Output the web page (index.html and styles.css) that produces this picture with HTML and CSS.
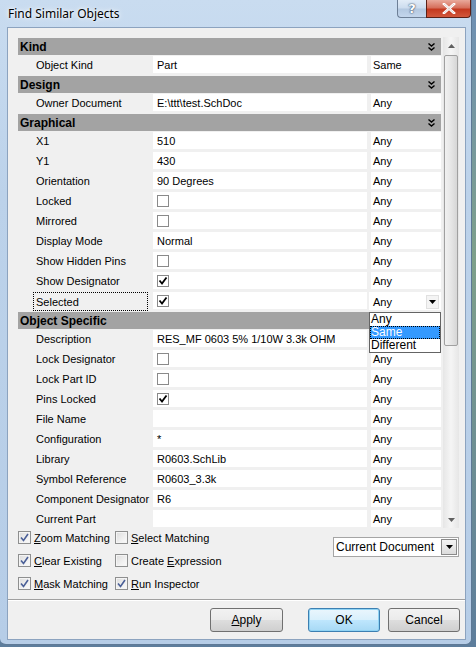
FILE: index.html
```html
<!DOCTYPE html>
<html>
<head>
<meta charset="utf-8">
<title>Find Similar Objects</title>
<link rel="stylesheet" href="styles.css">
</head>
<body>
<div class="desk">
  <div class="window">
    <div class="titlebar">
      <span class="title">Find Similar Objects</span>
      <div class="caption-btns">
        <div class="cbtn help"><span>?</span></div>
        <div class="cbtn close">
          <svg width="14" height="11" viewBox="0 0 14 11"><path d="M2 1 L12 10 M12 1 L2 10" stroke="#fff" stroke-width="2.6" fill="none" stroke-linecap="square"/><path d="M2 1 L12 10 M12 1 L2 10" stroke="#6b2a20" stroke-width="0.6" fill="none" opacity="0.35"/></svg>
        </div>
      </div>
    </div>
    <div class="client">
      <div class="main">
        <div class="panel">
          <div class="list">
            <div class="hdr"><span>Kind</span><svg class="chev" width="7" height="8" viewBox="0 0 7 8"><path d="M0.5 0.5 L3.5 3 L6.5 0.5 M0.5 4.5 L3.5 7 L6.5 4.5" stroke="#000" stroke-width="1.4" fill="none"/></svg></div>
            <div class="row"><span class="name">Object Kind</span><span class="val">Part</span><span class="match">Same</span></div>

            <div class="hdr"><span>Design</span><svg class="chev" width="7" height="8" viewBox="0 0 7 8"><path d="M0.5 0.5 L3.5 3 L6.5 0.5 M0.5 4.5 L3.5 7 L6.5 4.5" stroke="#000" stroke-width="1.4" fill="none"/></svg></div>
            <div class="row"><span class="name">Owner Document</span><span class="val">E:\ttt\test.SchDoc</span><span class="match">Any</span></div>

            <div class="hdr"><span>Graphical</span><svg class="chev" width="7" height="8" viewBox="0 0 7 8"><path d="M0.5 0.5 L3.5 3 L6.5 0.5 M0.5 4.5 L3.5 7 L6.5 4.5" stroke="#000" stroke-width="1.4" fill="none"/></svg></div>
            <div class="row"><span class="name">X1</span><span class="val">510</span><span class="match">Any</span></div>
            <div class="row"><span class="name">Y1</span><span class="val">430</span><span class="match">Any</span></div>
            <div class="row"><span class="name">Orientation</span><span class="val">90 Degrees</span><span class="match">Any</span></div>
            <div class="row"><span class="name">Locked</span><span class="val"><i class="gcb"></i></span><span class="match">Any</span></div>
            <div class="row"><span class="name">Mirrored</span><span class="val"><i class="gcb"></i></span><span class="match">Any</span></div>
            <div class="row"><span class="name">Display Mode</span><span class="val">Normal</span><span class="match">Any</span></div>
            <div class="row"><span class="name">Show Hidden Pins</span><span class="val"><i class="gcb"></i></span><span class="match">Any</span></div>
            <div class="row"><span class="name">Show Designator</span><span class="val"><i class="gcb on"><svg width="10" height="10" viewBox="0 0 10 10"><path d="M1.5 4.5 L4 7.5 L8.5 1.5" stroke="#000" stroke-width="1.8" fill="none"/></svg></i></span><span class="match">Any</span></div>
            <div class="row sel"><span class="name"><span class="focus">Selected</span></span><span class="val"><i class="gcb on"><svg width="10" height="10" viewBox="0 0 10 10"><path d="M1.5 4.5 L4 7.5 L8.5 1.5" stroke="#000" stroke-width="1.8" fill="none"/></svg></i></span><span class="match combo"><span class="ctext">Any</span><span class="carrow"><svg width="7" height="4" viewBox="0 0 7 4"><path d="M0 0 H7 L3.5 4 Z" fill="#000"/></svg></span>
              <span class="droplist">
                <span class="ditem">Any</span>
                <span class="ditem hi">Same</span>
                <span class="ditem">Different</span>
              </span>
            </span></div>

            <div class="hdr"><span>Object Specific</span></div>
            <div class="row"><span class="name">Description</span><span class="val">RES_MF 0603 5% 1/10W 3.3k OHM</span><span class="match"></span></div>
            <div class="row"><span class="name">Lock Designator</span><span class="val"><i class="gcb"></i></span><span class="match">Any</span></div>
            <div class="row"><span class="name">Lock Part ID</span><span class="val"><i class="gcb"></i></span><span class="match">Any</span></div>
            <div class="row"><span class="name">Pins Locked</span><span class="val"><i class="gcb on"><svg width="10" height="10" viewBox="0 0 10 10"><path d="M1.5 4.5 L4 7.5 L8.5 1.5" stroke="#000" stroke-width="1.8" fill="none"/></svg></i></span><span class="match">Any</span></div>
            <div class="row"><span class="name">File Name</span><span class="val"></span><span class="match">Any</span></div>
            <div class="row"><span class="name">Configuration</span><span class="val">*</span><span class="match">Any</span></div>
            <div class="row"><span class="name">Library</span><span class="val">R0603.SchLib</span><span class="match">Any</span></div>
            <div class="row"><span class="name">Symbol Reference</span><span class="val">R0603_3.3k</span><span class="match">Any</span></div>
            <div class="row"><span class="name">Component Designator</span><span class="val">R6</span><span class="match">Any</span></div>
            <div class="row"><span class="name">Current Part</span><span class="val"></span><span class="match">Any</span></div>
          </div>
          <div class="scroll">
            <div class="sarrow"><svg width="7" height="4" viewBox="0 0 7 4"><path d="M0 4 H7 L3.5 0 Z" fill="#606060"/></svg></div>
            <div class="strack">
              <div class="thumb"></div>
            </div>
            <div class="sarrow"><svg width="7" height="4" viewBox="0 0 7 4"><path d="M0 0 H7 L3.5 4 Z" fill="#606060"/></svg></div>
          </div>
        </div>

        <div class="bottom">
          <div class="opts">
            <label class="opt"><i class="wcb on"><svg width="9" height="9" viewBox="0 0 9 9"><path d="M1 4.5 L3.5 7.5 L8 1" stroke="#4a5f97" stroke-width="1.6" fill="none"/></svg></i><span><u>Z</u>oom Matching</span></label>
            <label class="opt"><i class="wcb"></i><span><u>S</u>elect Matching</span></label>
            <label class="opt"><i class="wcb on"><svg width="9" height="9" viewBox="0 0 9 9"><path d="M1 4.5 L3.5 7.5 L8 1" stroke="#4a5f97" stroke-width="1.6" fill="none"/></svg></i><span><u>C</u>lear Existing</span></label>
            <label class="opt"><i class="wcb"></i><span>Create <u>E</u>xpression</span></label>
            <label class="opt"><i class="wcb on"><svg width="9" height="9" viewBox="0 0 9 9"><path d="M1 4.5 L3.5 7.5 L8 1" stroke="#4a5f97" stroke-width="1.6" fill="none"/></svg></i><span><u>M</u>ask Matching</span></label>
            <label class="opt"><i class="wcb on"><svg width="9" height="9" viewBox="0 0 9 9"><path d="M1 4.5 L3.5 7.5 L8 1" stroke="#4a5f97" stroke-width="1.6" fill="none"/></svg></i><span><u>R</u>un Inspector</span></label>
          </div>
          <div class="scope">
            <span class="scope-text">Current Document</span>
            <span class="scope-btn"><svg width="7" height="4" viewBox="0 0 7 4"><path d="M0 0 H7 L3.5 4 Z" fill="#000"/></svg></span>
          </div>
        </div>
      </div>
      <div class="footer">
        <div class="btn apply"><u>A</u>pply</div>
        <div class="btn ok">OK</div>
        <div class="btn cancel">Cancel</div>
      </div>
    </div>
  </div>
</div>
</body>
</html>
```

FILE: styles.css
```css
html, body {
  margin: 0;
  padding: 0;
}
body {
  width: 476px;
  height: 647px;
  overflow: hidden;
  background: linear-gradient(180deg, #6e8fb5 0%, #7ea08a 40%, #5d7d9c 100%);
  font-family: "Liberation Sans", Arial, sans-serif;
  font-size: 11px;
  color: #000;
}
.desk {
  width: 476px;
  height: 647px;
}
.window {
  width: 472px;
  height: 645px;
  box-sizing: border-box;
  background: linear-gradient(180deg, #c9dcf0 0%, #bcd2ea 30%, #b6cde7 100%);
  border: 1px solid #5e7996;
  border-top: none;
  border-left: none;
  border-radius: 0 0 6px 6px;
  display: flex;
  flex-direction: column;
  padding: 0 5px 4px 7px;
}
.titlebar {
  height: 27px;
  display: flex;
  align-items: flex-start;
  justify-content: space-between;
  flex-shrink: 0;
}
.title {
  font-family: "Noto Sans", "Open Sans", sans-serif;
  font-size: 12px;
  margin-top: 5px;
  margin-left: 1px;
  color: #000;
  text-shadow: 0 0 6px #fff, 0 0 3px #fff;
}
.caption-btns {
  display: flex;
  margin-right: -5px;
}
.cbtn {
  height: 18px;
  box-sizing: border-box;
  border: 1px solid #6d7f96;
  border-top: none;
  display: flex;
  align-items: center;
  justify-content: center;
}
.help {
  width: 29px;
  border-radius: 0 0 0 4px;
  border-right: none;
  background: linear-gradient(180deg, #e2ecf7 0%, #ccdcee 48%, #b3c8e0 52%, #c4d6ec 100%);
  color: #fff;
  font-family: "DejaVu Sans", sans-serif;
  font-weight: bold;
  font-size: 13px;
  text-shadow: 0 0 2px #304460, 0 0 1px #304460;
}
.close {
  width: 45px;
  border-radius: 0 0 4px 0;
  border-color: #5b2016;
  background: linear-gradient(180deg, #e9a99b 0%, #d6705c 45%, #c4391f 55%, #d2583c 100%);
}
.client {
  flex: 1;
  background: #f0f0f0;
  border: 1px solid #8ca3bf;
  display: flex;
  flex-direction: column;
}
.main {
  padding: 9px 6px 0 10px;
}
.panel {
  display: flex;
  height: 491px;
  gap: 2px;
}
.list {
  width: 423px;
  height: 491px;
  overflow: hidden;
  position: relative;
}
.hdr {
  height: 17px;
  margin-top: 1px;
  background: #a3a3a3;
  display: flex;
  align-items: center;
  justify-content: space-between;
  font-weight: bold;
  font-size: 12px;
  padding: 1px 6px 0 2px;
  box-sizing: border-box;
}
.chev {
  display: block;
}
.row {
  height: 20px;
  display: grid;
  grid-template-columns: 135px 214px 74px;
  align-items: start;
}
.row > span {
  height: 17px;
  margin-top: 1px;
  padding-top: 1px;
  box-sizing: border-box;
  display: flex;
  align-items: center;
  white-space: nowrap;
  overflow: visible;
}
.name {
  padding-left: 18px;
}
.val {
  background: #fff;
  padding-left: 4px;
}
.match {
  background: #fff;
  padding-left: 2px;
  margin-left: 4px;
}
.sel {
  position: relative;
  z-index: 2;
}
.row.sel > .name {
  padding-left: 15px;
  padding-top: 0;
  height: 20px;
  margin-top: 0;
}
.focus {
  display: flex;
  align-items: center;
  width: 115px;
  height: 19px;
  padding-left: 2px;
  padding-top: 1px;
  box-sizing: border-box;
  border: 1px dotted #000;
}
.gcb {
  display: flex;
  align-items: center;
  justify-content: center;
  width: 10px;
  height: 10px;
  border: 1px solid #8a8a8a;
  background: #fff;
}
.row > .combo {
  position: relative;
  justify-content: space-between;
  margin-left: 2px;
  padding-left: 4px;
  height: 18px;
}
.carrow {
  width: 13px;
  height: 14px;
  margin-right: 2px;
  background: #f4f4f4;
  border: 1px solid #e0e0e0;
  box-sizing: border-box;
  display: flex;
  align-items: center;
  justify-content: center;
}
.droplist {
  position: absolute;
  left: 0;
  top: 20px;
  width: 72px;
  box-sizing: border-box;
  border: 1px solid #646464;
  background: #fff;
  display: flex;
  flex-direction: column;
  z-index: 5;
}
.ditem {
  height: 13px;
  line-height: 13px;
  padding-left: 1px;
  font-size: 12px;
}
.ditem.hi {
  background: #3399ff;
  color: #fff;
  outline: 1px dotted #000;
  outline-offset: -1px;
}
.scroll {
  width: 16px;
  height: 491px;
  display: flex;
  flex-direction: column;
  background: linear-gradient(90deg, #e6e6e6 0%, #f5f5f5 50%, #e6e6e6 100%);
}
.sarrow {
  height: 17px;
  display: flex;
  align-items: center;
  justify-content: center;
  flex-shrink: 0;
}
.strack {
  flex: 1;
  padding-top: 1px;
}
.thumb {
  height: 291px;
  margin: 0 0 0 1px;
  width: 14px;
  box-sizing: border-box;
  border: 1px solid #a0a0a0;
  border-radius: 2px;
  background: linear-gradient(90deg, #f1f1f1 0%, #e6e6e6 50%, #d6d6d6 100%);
}
.bottom {
  display: flex;
  justify-content: space-between;
  align-items: flex-start;
  margin-top: 3px;
}
.opts {
  display: grid;
  grid-template-columns: 97px 140px;
  row-gap: 10px;
}
.opt {
  display: flex;
  align-items: center;
  height: 13px;
  gap: 3px;
  white-space: nowrap;
}
.opt u, .btn u {
  text-decoration: underline;
  text-underline-offset: 1px;
}
.wcb {
  width: 13px;
  height: 13px;
  box-sizing: border-box;
  border: 1px solid #8e8f8f;
  background: linear-gradient(135deg, #dcdcdc 0%, #f0f0f0 60%, #fbfbfb 100%);
  box-shadow: inset 0 0 0 1px #f4f4f4;
  display: flex;
  align-items: center;
  justify-content: center;
  flex-shrink: 0;
}
.scope {
  margin-top: 6px;
  width: 126px;
  height: 20px;
  box-sizing: border-box;
  border: 1px solid #a5a5a5;
  background: #fff;
  display: flex;
  align-items: center;
  justify-content: space-between;
  font-size: 12px;
}
.scope-text {
  padding-left: 2px;
}
.scope-btn {
  width: 16px;
  height: 16px;
  margin-right: 1px;
  box-sizing: border-box;
  border: 1px solid #8a8a8a;
  background: linear-gradient(180deg, #f4f4f4 0%, #dcdcdc 100%);
  display: flex;
  align-items: center;
  justify-content: center;
}
.footer {
  margin-top: auto;
  height: 40px;
  border-top: 1px solid #a0a0a0;
  box-shadow: inset 0 1px 0 #fff;
  display: flex;
  justify-content: flex-end;
  align-items: flex-start;
  padding: 8px 5px 0 0;
  box-sizing: border-box;
}
.btn {
  height: 24px;
  box-sizing: border-box;
  border: 1px solid #707070;
  border-radius: 3px;
  background: linear-gradient(180deg, #f2f2f2 0%, #ebebeb 48%, #dddddd 52%, #cfcfcf 100%);
  display: flex;
  align-items: center;
  justify-content: center;
  font-size: 12px;
}
.apply {
  width: 73px;
}
.ok {
  width: 72px;
  margin-left: 25px;
  border-color: #3c7fb1;
  box-shadow: inset 0 0 0 1px #8fd3f4;
  background: linear-gradient(180deg, #eaf6fd 0%, #d9f0fc 48%, #bee6fd 52%, #a7d9f5 100%);
}
.cancel {
  width: 72px;
  margin-left: 8px;
}
```
